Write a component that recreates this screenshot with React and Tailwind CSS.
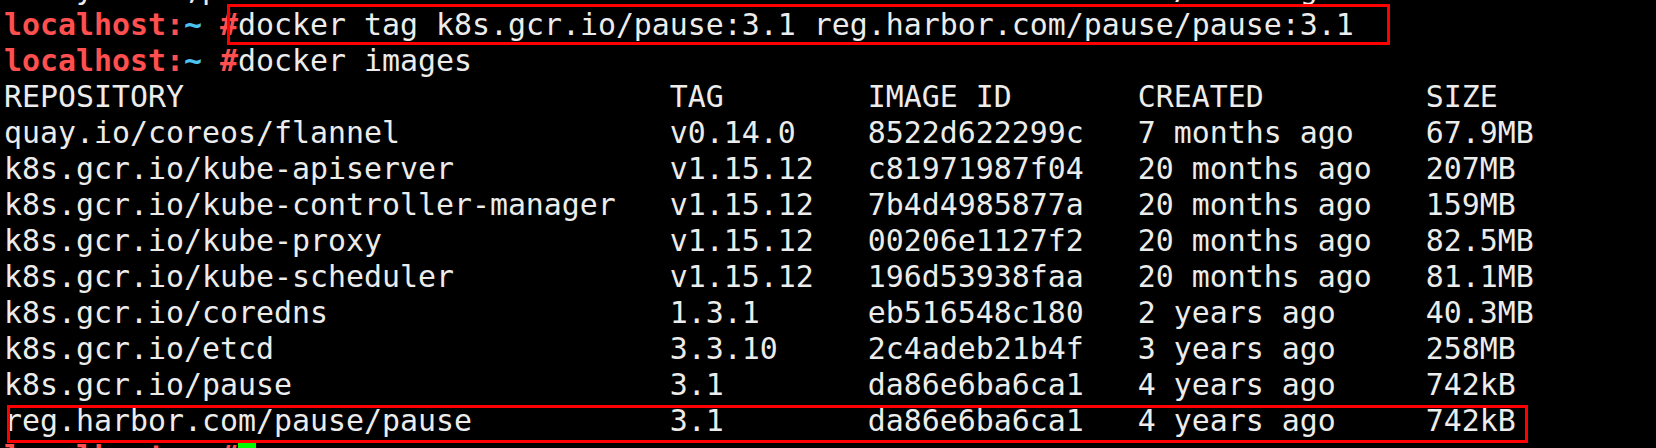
import React from "react";

const rows = [
  ["REPOSITORY", "TAG", "IMAGE ID", "CREATED", "SIZE"],
  ["quay.io/coreos/flannel", "v0.14.0", "8522d622299c", "7 months ago", "67.9MB"],
  ["k8s.gcr.io/kube-apiserver", "v1.15.12", "c81971987f04", "20 months ago", "207MB"],
  ["k8s.gcr.io/kube-controller-manager", "v1.15.12", "7b4d4985877a", "20 months ago", "159MB"],
  ["k8s.gcr.io/kube-proxy", "v1.15.12", "00206e1127f2", "20 months ago", "82.5MB"],
  ["k8s.gcr.io/kube-scheduler", "v1.15.12", "196d53938faa", "20 months ago", "81.1MB"],
  ["k8s.gcr.io/coredns", "1.3.1", "eb516548c180", "2 years ago", "40.3MB"],
  ["k8s.gcr.io/etcd", "3.3.10", "2c4adeb21b4f", "3 years ago", "258MB"],
  ["k8s.gcr.io/pause", "3.1", "da86e6ba6ca1", "4 years ago", "742kB"],
  ["reg.harbor.com/pause/pause", "3.1", "da86e6ba6ca1", "4 years ago", "742kB"],
];

const widths = [37, 11, 15, 16, 0];

function fmt(r) {
  return r.map((c, i) => (widths[i] ? c.padEnd(widths[i], " ") : c)).join("");
}

function Prompt({ children }) {
  return (
    <div className="whitespace-pre h-[36px]">
      <span className="font-bold text-[#ff4f4f]">localhost:</span>
      <span className="font-bold text-[#4cc2f2]">~</span>
      <span> </span>
      <span className="font-bold text-[#ff4f4f]">#</span>
      {children}
    </div>
  );
}

export default function App() {
  const topLine =
    "    y     ,p" + " ".repeat(53) + "/" + " ".repeat(6) + "g";
  return (
    <div className="relative w-[1656px] h-[448px] overflow-hidden bg-black">
      <div
        className="pl-[4px] mt-[-29px] text-[29.9px] leading-[36px] text-[#ececec]"
        style={{ fontFamily: '"DejaVu Sans Mono", monospace' }}
      >
        <div className="whitespace-pre h-[36px]">{topLine}</div>
        <Prompt>docker tag k8s.gcr.io/pause:3.1 reg.harbor.com/pause/pause:3.1</Prompt>
        <Prompt>docker images</Prompt>
        {rows.map((r, i) => (
          <div key={i} className="whitespace-pre h-[36px]">
            {fmt(r)}
          </div>
        ))}
        <Prompt>
          <span className="inline-block align-top mt-[2px] w-[18px] h-[34px] bg-[#00ff00]"></span>
        </Prompt>
      </div>
      <div className="absolute left-[227px] top-[4px] w-[1163px] h-[41px] border-[3px] border-[#ff0000]"></div>
      <div className="absolute left-[7px] top-[405px] w-[1521px] h-[38px] border-[3px] border-[#ff0000]"></div>
    </div>
  );
}
